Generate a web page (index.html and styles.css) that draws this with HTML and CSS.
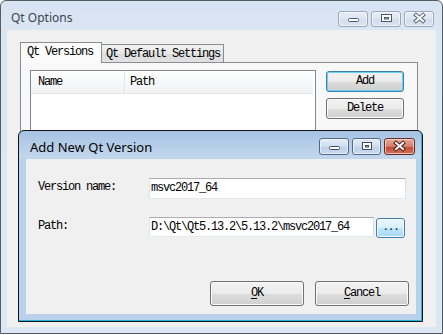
FILE: index.html
```html
<!DOCTYPE html>
<html>
<head>
<meta charset="utf-8">
<link rel="stylesheet" href="styles.css">
</head>
<body>
<div class="win">
  <div class="win-title">
    <span class="caption">Qt Options</span>
    <div class="caps">
      <span class="cap"><svg width="30" height="16" viewBox="0 0 30 16"><rect x="10.5" y="7.5" width="10" height="3" rx="1" fill="#fff" stroke="#4b5a70"/></svg></span>
      <span class="cap"><svg width="30" height="16" viewBox="0 0 30 16"><rect x="10.5" y="3.5" width="10" height="7" fill="#fff" stroke="#4b5a70"/><rect x="13.5" y="6.5" width="4" height="1.5" fill="#c9d6e6" stroke="#4b5a70"/></svg></span>
      <span class="cap"><svg width="30" height="16" viewBox="0 0 30 16"><path d="M12 4 L19 10 M19 4 L12 10" stroke="#5a6678" stroke-width="4" stroke-linecap="square"/><path d="M12 4 L19 10 M19 4 L12 10" stroke="#fff" stroke-width="2" stroke-linecap="square"/></svg></span>
    </div>
  </div>
  <div class="win-body">
    <div class="tabbar">
      <div class="tab active">Qt Versions</div>
      <div class="tab">Qt Default Settings</div>
    </div>
    <div class="pane">
      <div class="tree">
        <div class="tree-head">
          <div class="th th-name">Name</div>
          <div class="th th-path">Path</div>
        </div>
      </div>
      <div class="side">
        <div class="btn side-btn default">Add</div>
        <div class="btn side-btn">Delete</div>
      </div>
    </div>
  </div>

  <div class="dialog">
    <div class="dlg-title">
      <span class="dlg-caption">Add New Qt Version</span>
      <div class="dcaps">
        <span class="dcap"><svg width="30" height="17" viewBox="0 0 30 17"><rect x="10.5" y="8.5" width="10" height="3" rx="1" fill="#fff" stroke="#3b4c66"/></svg></span>
        <span class="dcap"><svg width="29" height="17" viewBox="0 0 29 17"><rect x="10.5" y="4.5" width="9" height="7" fill="#fff" stroke="#3b4c66"/><rect x="13.5" y="7.5" width="3" height="1.5" fill="#b8cbe3" stroke="#3b4c66"/></svg></span>
        <span class="dcap close"><svg width="31" height="17" viewBox="0 0 31 17"><path d="M12 5 L19 11 M19 5 L12 11" stroke="#4a1c15" stroke-width="4" stroke-linecap="square"/><path d="M12 5 L19 11 M19 5 L12 11" stroke="#fff" stroke-width="2" stroke-linecap="square"/></svg></span>
      </div>
    </div>
    <div class="dlg-body">
      <div class="form">
        <div class="label">Version name:</div>
        <div class="input input-name">msvc2017_64</div>
        <div class="label">Path:</div>
        <div class="path-row">
          <div class="input input-path">D:\Qt\Qt5.13.2\5.13.2\msvc2017_64</div>
          <div class="btn browse">...</div>
        </div>
      </div>
      <div class="actions">
        <div class="btn action"><u>O</u>K</div>
        <div class="btn action"><u>C</u>ancel</div>
      </div>
    </div>
  </div>
</div>
</body>
</html>
```
FILE: styles.css
```css
* { box-sizing: border-box; margin: 0; padding: 0; }
body {
  margin: 0;
  width: 443px;
  height: 335px;
  overflow: hidden;
  background: #ffffff;
  font-family: "Liberation Mono", monospace;
  font-size: 12px;
  letter-spacing: -1.2px;
  color: #000;
}
.win {
  position: relative;
  width: 443px;
  height: 334px;
  border: 1px solid #565c64;
  border-radius: 6px 6px 0 0;
  background: linear-gradient(#d6e3f2, #dbe6f3 30px, #dce7f4);
  display: flex;
  flex-direction: column;
  padding: 0 6px 6px 6px;
}
.win-title {
  height: 29px;
  display: flex;
  align-items: flex-start;
}
.caption {
  font-family: "Noto Sans", sans-serif;
  font-size: 12px;
  letter-spacing: 0;
  color: #3b4450;
  margin-left: 4px;
  margin-top: 8px;
  line-height: 17px;
}
.caps {
  margin-left: auto;
  margin-top: 10px;
  margin-right: 2px;
  display: flex;
  gap: 3px;
}
.cap {
  display: block;
  width: 30px;
  height: 16px;
  border: 1px solid #9aa8bb;
  border-radius: 3px;
  background: linear-gradient(#e8eef7, #dce5f1 50%, #d3deec 51%, #d9e3f0);
  box-shadow: inset 0 0 0 1px rgba(255,255,255,0.6);
  overflow: hidden;
}
.cap svg { display: block; margin: -1px 0 0 -1px; }
.win-body {
  flex: 1;
  background: #f0f0f0;
  padding: 12px 0 0 13px;
}
.tabbar {
  display: flex;
  align-items: flex-end;
  height: 20px;
}
.tab {
  height: 18px;
  border: 1px solid #898c95;
  border-bottom: none;
  background: linear-gradient(#f3f3f3, #e6e6e6 50%, #dcdcdc 51%, #e1e1e1);
  line-height: 18px;
  white-space: nowrap;
  width: 123px;
  margin-left: -1px;
  padding-left: 4px;
}
.tab.active {
  position: relative;
  z-index: 2;
  height: 21px;
  margin-bottom: -1px;
  margin-left: 0;
  width: 82px;
  padding-left: 6px;
  line-height: 19px;
  background: #fbfbfb;
}
.pane {
  width: 398px;
  height: 255px;
  border: 1px solid #898c95;
  background: #f8f8f8;
  display: flex;
  padding: 7px 13px 0 9px;
  gap: 10px;
}
.tree {
  width: 286px;
  height: 240px;
  border: 1px solid #828790;
  background: #fff;
}
.tree-head {
  display: flex;
  height: 23px;
  margin-right: 2px;
  background: linear-gradient(#ffffff, #f7f8f9 50%, #f1f2f4);
  border-bottom: 1px solid #e5e5e5;
}
.th {
  line-height: 22px;
}
.th-name {
  width: 94px;
  padding-left: 7px;
  border-right: 1px solid #e3e6ea;
}
.th-path {
  padding-left: 5px;
}
.side {
  display: flex;
  flex-direction: column;
  gap: 6px;
  margin-top: 1px;
}
.btn {
  border: 1px solid #707070;
  border-radius: 3px;
  background: linear-gradient(#f2f2f2, #ebebeb 50%, #dddddd 51%, #cfcfcf);
  box-shadow: inset 0 0 0 1px #fafafa;
  text-align: center;
  white-space: nowrap;
}
.side-btn {
  width: 78px;
  height: 21px;
  line-height: 19px;
}
.btn.default {
  border-color: #3c7fb1;
  box-shadow: inset 0 0 0 1px #6fd0f6;
}
.dialog {
  position: absolute;
  left: 17px;
  top: 129px;
  width: 405px;
  height: 192px;
  border: 1px solid #111;
  border-radius: 6px 6px 0 0;
  background: linear-gradient(#a6c2e2 0px, #c3d7ed 27px, #b9d1ea 28px, #b9d1ea);
  box-shadow: inset -1px -1px 0 #25b6e2;
  display: flex;
  flex-direction: column;
  padding: 0 6px 7px 7px;
}
.dlg-title {
  height: 28px;
  display: flex;
  align-items: flex-start;
}
.dlg-caption {
  font-family: "Noto Sans", sans-serif;
  font-size: 13px;
  letter-spacing: 0;
  color: #000;
  margin-left: 4px;
  margin-top: 7px;
  line-height: 18px;
}
.dcaps {
  margin-left: auto;
  margin-top: 7px;
  margin-right: 1px;
  display: flex;
  gap: 3px;
}
.dcap {
  display: block;
  width: 30px;
  height: 17px;
  border: 1px solid #53698a;
  border-radius: 3px;
  background: linear-gradient(#e4edf7, #cfdded 50%, #bdd0e7 51%, #c9daee);
  box-shadow: inset 0 0 0 1px rgba(255,255,255,0.55);
  overflow: hidden;
}
.dcap:nth-child(2) { width: 29px; }
.dcap.close {
  width: 31px;
  border-color: #6b2a20;
  background: linear-gradient(#e9a99b, #d67d69 50%, #c4482f 51%, #d0735d);
}
.dcap svg { display: block; margin: -1px 0 0 -1px; }
.dlg-body {
  flex: 1;
  background: #f0f0f0;
  display: flex;
  flex-direction: column;
  padding: 19px 7px 8px 12px;
}
.form {
  display: grid;
  grid-template-columns: 111px 1fr;
  row-gap: 18px;
  align-items: center;
  margin-right: 3px;
}
.label {
  line-height: 14px;
  margin-top: -3px;
}
.input {
  height: 21px;
  background: #fff;
  border: 1px solid;
  border-color: #abadb3 #dbdfe6 #e3e9ef #e2e3ea;
  padding-left: 1px;
  line-height: 19px;
  white-space: nowrap;
  overflow: hidden;
}
.path-row {
  display: flex;
  gap: 2px;
  align-items: flex-start;
}
.input-path {
  width: 225px;
  height: 20px;
  line-height: 18px;
}
.browse {
  width: 29px;
  height: 20px;
  line-height: 17px;
  margin-top: 1px;
  border-color: #3c7fb1;
  background: linear-gradient(#eaf6fd, #d9f0fc 50%, #bee6fd 51%, #a7d9f5);
  box-shadow: inset 0 0 0 1px #f4fbfe;
  font-size: 11px;
}
.actions {
  margin-top: auto;
  display: flex;
  justify-content: flex-end;
  gap: 11px;
}
.action {
  width: 94px;
  height: 25px;
  line-height: 23px;
}
u { text-decoration: underline; text-underline-offset: 2px; }
```
